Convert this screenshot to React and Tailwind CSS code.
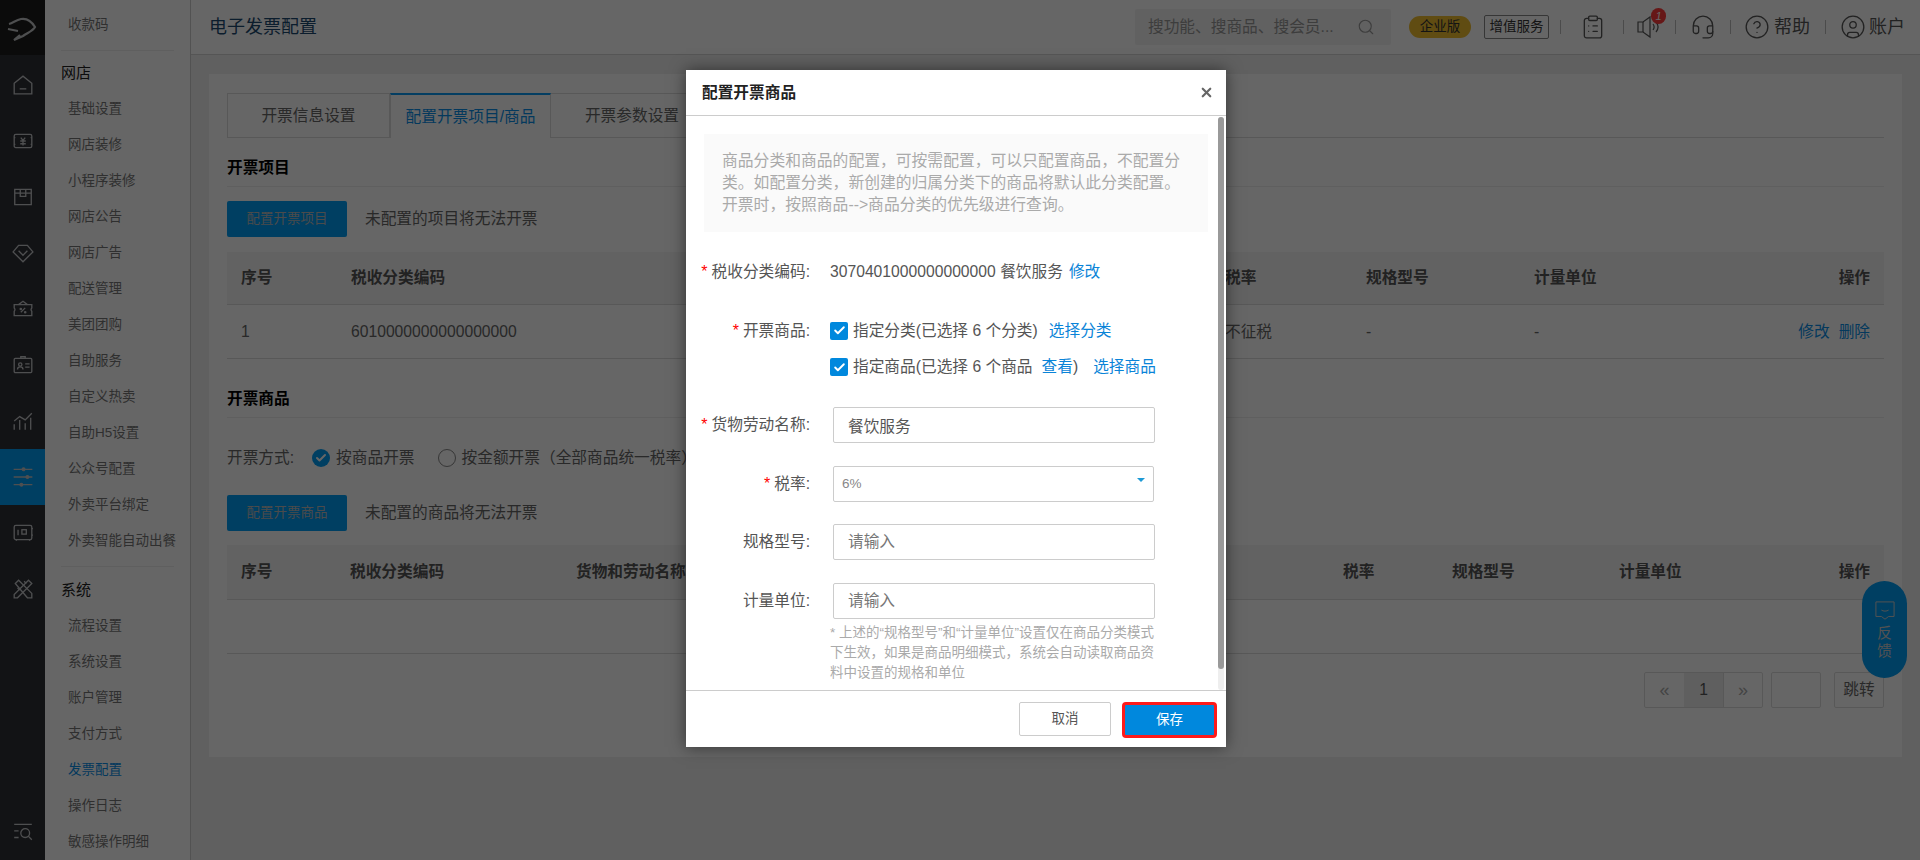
import React from 'react';
import { Search, ClipboardList, Headset, CircleHelp, CircleUser, X, Check } from 'lucide-react';

const sideIcons = [
  <g key="home"><path d="M2 8.5 10 2l8 6.5V18H2Z" /><path d="M7 13.5h6" /></g>,
  <g key="money"><rect x="2" y="4" width="16" height="12" rx="1.5" /><path d="M8 7l2 2.5L12 7M7.5 10h5M7.5 12.5h5M10 9.5V14" /><path d="M2 7h1M2 13h1M17 7h1M17 13h1" /></g>,
  <g key="box"><path d="M2.5 3h15v14h-15Z" /><path d="M2.5 6.5h15M7.5 3v6.5h5V3" /></g>,
  <g key="diamond"><path d="M6 3h8l5 6-9 9-9-9Z" /><path d="M6 8l4 4 4-4" /></g>,
  <g key="ticket"><path d="M2 6h16v3a2 2 0 0 0 0 3v4H2v-4a2 2 0 0 0 0-3Z" /><path d="M6 6l4-3 4 3M8 13l4-4" /><circle cx="8" cy="10" r=".6" /><circle cx="12" cy="13" r=".6" /></g>,
  <g key="card"><rect x="2" y="4" width="16" height="13" rx="1" /><path d="M8 4V2.5h4V4" /><circle cx="7.5" cy="9.5" r="1.5" /><path d="M5 14c0-3 5-3 5 0M12 9h4M12 12h4" /></g>,
  <g key="chart"><path d="M2 18v-5M7 18V9M12 18v-6M17 18V7M2 10l5-4 5 3 6-6" /></g>,
  <g key="sliders"><path d="M1.5 3h17M1.5 10h17M1.5 17h17" /><circle cx="10.5" cy="3" r="1.2" fill="currentColor" /><circle cx="14" cy="10" r="1.2" fill="currentColor" /><circle cx="8.5" cy="17" r="1.2" fill="currentColor" /></g>,
  <g key="safe"><rect x="2" y="3" width="16" height="13" rx="1.5" /><rect x="9" y="7" width="4" height="4" /><path d="M5.5 7v5M18 6h1M18 12h1M4 16v1M16 16v1" /></g>,
  <g key="tools"><path d="M3 5l3-3 12 12v4h-4Z" /><path d="M15 2l3 3-13 13H2v-3Z" /><path d="M11 3l2 2M5 9l2 2" /></g>,
];

const SideIcon = ({ children, className }) => (
  <svg width="22" height="22" viewBox="0 0 20 20" fill="none" stroke="currentColor" strokeWidth="1.2" className={className}>
    {children}
  </svg>
);

const shopMenu = ['基础设置', '网店装修', '小程序装修', '网店公告', '网店广告', '配送管理', '美团团购', '自助服务', '自定义热卖', '自助H5设置', '公众号配置', '外卖平台绑定', '外卖智能自动出餐'];
const systemMenu = ['流程设置', '系统设置', '账户管理', '支付方式', '发票配置', '操作日志', '敏感操作明细'];

const MenuItem = ({ label, active }) => (
  <div className={`h-9 flex items-center pl-[23px] whitespace-nowrap text-[13.5px] ${active ? 'text-[#0a8fe8]' : 'text-[#777]'}`}>
    {label}
  </div>
);

const Sep = () => <div className="w-px h-[14px] bg-[#bbb]" />;

const BlueBtn = ({ children }) => (
  <div className="w-[120px] h-9 rounded-[2px] bg-[#009df5] text-[#bbb] text-[13.5px] flex items-center justify-center">{children}</div>
);

const SectionTitle = ({ children }) => (
  <div className="h-[37px] border-b border-[#eee] text-[15.7px] font-bold text-black flex items-center">{children}</div>
);

const Cell = ({ children, className = '' }) => <div className={`flex items-center whitespace-nowrap ${className}`}>{children}</div>;

const Field = ({ label, required, children, className = '' }) => (
  <div className={`flex items-center ${className}`}>
    <div className="w-[124px] shrink-0 text-right text-[15.7px] text-[#555] whitespace-nowrap">
      {required && <span className="text-[#f00] text-[16px] mr-[4px]">*</span>}
      {label}:
    </div>
    {children}
  </div>
);

const TextBox = ({ placeholder, value }) => (
  <input
    readOnly
    placeholder={placeholder}
    defaultValue={value}
    className="ml-[23px] w-[322px] h-9 border border-[#ccc] rounded-[2px] px-[14px] text-[15.7px] text-[#555] placeholder:text-[#777] outline-none"
  />
);

const CheckBox = () => (
  <span className="w-[18px] h-[18px] rounded-[2px] bg-[#0088dd] flex items-center justify-center shrink-0">
    <Check size={13} strokeWidth={3.5} className="text-white" />
  </span>
);

export default function App() {
  return (
    <div className="relative w-[1920px] h-[860px] overflow-hidden flex bg-[#f0f0f0] [font-family:'Liberation_Sans','Noto_Sans_CJK_SC',sans-serif]">
      {/* icon rail */}
      <div className="w-[45px] shrink-0 bg-[#2e3036] flex flex-col text-[#c4c6c8]">
        <div className="h-[55px] bg-[#1c1c1c]">
          <svg width="45" height="55" viewBox="0 0 45 55" fill="none" stroke="currentColor" strokeWidth="2.2">
            <path d="M9 24C13 23 16 20 21 19C27 18 32 22 35 27C33 31 27 33 23 36L14 40L20 35" />
            <path d="M8 29L18 31" />
          </svg>
        </div>
        <div className="pt-[2px]">
          {sideIcons.map((icon, i) => (
            <div key={i} className={`h-14 flex items-center justify-center ${i === 7 ? 'bg-[#009df5]' : ''}`}>
              <SideIcon>{icon}</SideIcon>
            </div>
          ))}
        </div>
        <div className="mt-auto mb-[17px] flex justify-center">
          <SideIcon>
            <path d="M2 3h16M2 9h4M2 15h4" />
            <circle cx="12" cy="11" r="4" />
            <path d="M15 14l3 3" />
          </SideIcon>
        </div>
      </div>

      {/* sub menu */}
      <div className="w-[146px] shrink-0 bg-white border-r border-[#ccc]">
        <div className="mx-4 h-[51px] border-b border-[#eee] pl-[7px] flex items-center text-[13.5px] text-[#777]">收款码</div>
        <div className="h-[45px] pl-4 flex items-center text-[15px] text-[#222]">网店</div>
        <div className="-mt-[4.5px] ml-0">
          {shopMenu.map((m) => <MenuItem key={m} label={m} />)}
        </div>
        <div className="mx-4 mt-[6px] border-b border-[#eee]" />
        <div className="h-[47px] pl-4 flex items-center text-[15px] text-[#222]">系统</div>
        <div className="-mt-[5px]">
          {systemMenu.map((m) => <MenuItem key={m} label={m} active={m === '发票配置'} />)}
        </div>
      </div>

      {/* main */}
      <div className="flex-1 min-w-0 flex flex-col">
        <div className="h-[55px] shrink-0 bg-white border-b border-[#d5d5d5] flex items-center pl-[18px]">
          <div className="text-[18px] text-[#1d4a70]">电子发票配置</div>
          <div className="ml-auto flex items-center text-[#555]">
            <div className="w-[256px] h-9 bg-[#f2f2f2] rounded-[2px] flex items-center pl-[13px] pr-[16px] text-[15.7px] text-[#999]">
              <span className="flex-1">搜功能、搜商品、搜会员...</span>
              <Search size={18} strokeWidth={1.5} />
            </div>
            <div className="ml-[18px] w-[62px] h-[22px] rounded-full bg-[#f0be2e] text-[13.5px] text-[#333] flex items-center justify-center">企业版</div>
            <div className="ml-[13px] w-[65px] h-[24px] border border-[#888] rounded-[2px] text-[13.5px] text-[#333] flex items-center justify-center">增值服务</div>
            <div className="ml-[11px]"><Sep /></div>
            <ClipboardList size={26} strokeWidth={1.2} className="ml-[19px]" />
            <div className="ml-[17px]"><Sep /></div>
            <div className="relative ml-[13px]">
              <svg width="24" height="26" viewBox="0 0 24 26" fill="none" stroke="currentColor" strokeWidth="1.2">
                <path d="M1 8h5l7-5v20l-7-5H1Z" />
                <path d="M6 8v10" />
                <path d="M16 10c1.5 2 1.5 4 0 6M19 8c2.5 3 2.5 7 0 10" />
              </svg>
              <span className="absolute -top-[6px] right-[-5px] w-[15px] h-[16px] rounded-full bg-[#ff3a3a] text-white text-[11px] italic flex items-center justify-center">1</span>
            </div>
            <div className="ml-[14px]"><Sep /></div>
            <Headset size={26} strokeWidth={1.2} className="ml-[14px]" />
            <div className="ml-[14px]"><Sep /></div>
            <CircleHelp size={26} strokeWidth={1.2} className="ml-[13px]" />
            <span className="ml-[4px] text-[18px]">帮助</span>
            <div className="ml-[15px]"><Sep /></div>
            <CircleUser size={26} strokeWidth={1.2} className="ml-[14px]" />
            <span className="ml-[3px] mr-[15px] text-[18px]">账户</span>
          </div>
        </div>

        <div className="mx-[18px] mt-[19px] h-[683px] bg-white px-[18px] pt-[19px] text-[#666]">
          {/* tabs */}
          <div className="flex h-[45px] border-b border-[#ddd] text-[15.7px]">
            <div className="w-[163px] h-[45px] border border-[#ddd] flex items-center justify-center">开票信息设置</div>
            <div className="w-[161px] h-[45px] border-x border-[#ddd] border-t-2 border-t-[#0a9cf5] bg-white text-[#0a8fe8] flex items-center justify-center">配置开票项目/商品</div>
            <div className="w-[163px] h-[45px] border-y border-r border-[#ddd] flex items-center justify-center">开票参数设置</div>
          </div>

          {/* items */}
          <div className="mt-3"><SectionTitle>开票项目</SectionTitle></div>
          <div className="mt-[14px] flex items-center">
            <BlueBtn>配置开票项目</BlueBtn>
            <span className="ml-[18px] text-[15.7px]">未配置的项目将无法开票</span>
          </div>
          <div className="mt-[15px] text-[15.7px]">
            <div className="h-[53px] grid grid-cols-[124px_874px_141px_168px_1fr_auto] bg-[#f5f5f5] border-b border-[#ddd] font-bold text-[#555]">
              <Cell className="pl-[14px]">序号</Cell>
              <Cell>税收分类编码</Cell>
              <Cell>税率</Cell>
              <Cell>规格型号</Cell>
              <Cell>计量单位</Cell>
              <Cell className="pr-[14px]">操作</Cell>
            </div>
            <div className="h-[54px] grid grid-cols-[124px_874px_141px_168px_1fr_auto] border-b border-[#ddd]">
              <Cell className="pl-[14px]">1</Cell>
              <Cell>6010000000000000000</Cell>
              <Cell>不征税</Cell>
              <Cell>-</Cell>
              <Cell>-</Cell>
              <Cell className="pr-[14px] text-[#0a8fe8] gap-[9px]"><span>修改</span><span>删除</span></Cell>
            </div>
          </div>

          {/* goods */}
          <div className="mt-[22px]"><SectionTitle>开票商品</SectionTitle></div>
          <div className="mt-7 flex items-center text-[15.7px] h-6">
            <span>开票方式:</span>
            <span className="ml-[18px] w-[18px] h-[18px] rounded-full bg-[#009df5] flex items-center justify-center">
              <Check size={12} strokeWidth={4} className="text-white" />
            </span>
            <span className="ml-[6px]">按商品开票</span>
            <span className="ml-[23px] w-[18px] h-[18px] rounded-full border border-[#888]" />
            <span className="ml-[6px]">按金额开票（全部商品统一税率）</span>
          </div>
          <div className="mt-[25px] flex items-center">
            <BlueBtn>配置开票商品</BlueBtn>
            <span className="ml-[18px] text-[15.7px]">未配置的商品将无法开票</span>
          </div>
          <div className="mt-[14px] text-[15.7px]">
            <div className="h-[55px] grid grid-cols-[123px_226px_767px_109px_167px_1fr_auto] bg-[#f5f5f5] border-b border-[#ddd] font-bold text-[#555]">
              <Cell className="pl-[14px]">序号</Cell>
              <Cell>税收分类编码</Cell>
              <Cell>货物和劳动名称</Cell>
              <Cell>税率</Cell>
              <Cell>规格型号</Cell>
              <Cell>计量单位</Cell>
              <Cell className="pr-[14px]">操作</Cell>
            </div>
            <div className="h-[54px] border-b border-[#ddd]" />
          </div>

          {/* pager */}
          <div className="mt-[18px] flex justify-end text-[15.7px]">
            <div className="flex h-[36px] border border-[#ddd] rounded-[2px] text-[#aaa]">
              <div className="w-[39px] flex items-center justify-center text-[18px]">«</div>
              <div className="w-[39px] flex items-center justify-center bg-[#eee] text-[#555]">1</div>
              <div className="w-[39px] flex items-center justify-center border-l border-[#ddd] text-[18px]">»</div>
            </div>
            <div className="ml-2 w-[50px] h-[36px] border border-[#ddd] rounded-[2px]" />
            <div className="ml-[13px] w-[50px] h-[36px] border border-[#ddd] rounded-[2px] flex items-center justify-center">跳转</div>
          </div>
        </div>
      </div>

      {/* feedback pill */}
      <div className="absolute left-[1862px] top-[581px] w-[45px] h-[97px] rounded-full bg-[#009df5] text-[#ccc] flex flex-col items-center pt-5 text-[15px] leading-[18px]">
        <svg width="20" height="20" viewBox="0 0 22 22" fill="none" stroke="currentColor" strokeWidth="1.1" className="mb-[3px]">
          <path d="M1 1h20v16h-6l-4 3-4-3H1Z" />
          <path d="M7 10c2 1.5 6 1.5 8 0" />
        </svg>
        <span>反</span>
        <span>馈</span>
      </div>

      {/* backdrop */}
      <div className="absolute inset-0 bg-black/60" />

      {/* modal */}
      <div className="absolute left-[686px] top-[70px] w-[540px] h-[677px] bg-white shadow-[0_0_15px_rgba(0,0,0,0.5)] flex flex-col">
        <div className="h-[46px] shrink-0 border-b border-[#ccc] pl-4 pr-3 flex items-center justify-between">
          <span className="text-[15.7px] font-bold text-[#222]">配置开票商品</span>
          <X size={15} strokeWidth={3.5} className="text-[#666]" />
        </div>

        <div className="relative flex-1 min-h-0 text-[15.7px] text-[#555]">
          <div className="absolute right-[2px] top-[1px] w-[6px] bottom-0 rounded-full bg-[#eee]">
            <div className="h-[552px] rounded-full bg-[#999]" />
          </div>

          <div className="mx-[18px] mt-[18px] h-[98px] bg-[#fafafa] px-[18px] py-4 leading-[22px] text-[15.8px] text-[#aaa]">
            商品分类和商品的配置，可按需配置，可以只配置商品，不配置分类。如配置分类，新创建的归属分类下的商品将默认此分类配置。开票时，按照商品--&gt;商品分类的优先级进行查询。
          </div>

          <Field required label="税收分类编码" className="mt-[29px] h-[22px]">
            <span className="ml-5 whitespace-nowrap">3070401000000000000 餐饮服务</span>
            <span className="ml-[6px] text-[#0a84d8]">修改</span>
          </Field>
          <Field required label="开票商品" className="mt-[36px] h-6">
            <span className="ml-5 flex items-center whitespace-nowrap">
              <CheckBox />
              <span className="ml-[5px]">指定分类(已选择 6 个分类)</span>
              <span className="ml-[11px] text-[#0a84d8]">选择分类</span>
            </span>
          </Field>
          <div className="mt-3 h-6 ml-[144px] flex items-center whitespace-nowrap">
            <CheckBox />
            <span className="ml-[5px]">指定商品(已选择 6 个商品</span>
            <span className="ml-[9px] text-[#0a84d8]">查看</span>
            <span>)</span>
            <span className="ml-[15px] text-[#0a84d8]">选择商品</span>
          </div>
          <Field required label="货物劳动名称" className="mt-7">
            <TextBox value="餐饮服务" />
          </Field>
          <Field required label="税率" className="mt-[23px]">
            <div className="ml-[23px] w-[321px] h-9 border border-[#ccc] rounded-[2px] pl-2 pr-2 flex items-center justify-between text-[13.5px] text-[#888]">
              <span>6%</span>
              <svg width="8" height="6" viewBox="0 0 8 6" className="-mt-2 text-[#1d9ad6]" fill="currentColor">
                <path d="M0 1h8L4 5Z" />
              </svg>
            </div>
          </Field>
          <Field label="规格型号" className="mt-[22px]">
            <TextBox placeholder="请输入" />
          </Field>
          <Field label="计量单位" className="mt-[23px]">
            <TextBox placeholder="请输入" />
          </Field>
          <div className="mt-1 ml-[144px] w-[326px] text-[13.5px] leading-5 text-[#aaa]">
            * 上述的“规格型号”和“计量单位”设置仅在商品分类模式下生效，如果是商品明细模式，系统会自动读取商品资料中设置的规格和单位
          </div>
        </div>

        <div className="h-[57px] shrink-0 border-t border-[#ccc] flex items-start pt-[11px] text-[13.5px]">
          <div className="ml-[333px] w-[92px] h-[34px] border border-[#ccc] rounded-[2px] text-[#555] flex items-center justify-center">取消</div>
          <div className="ml-[11px] w-[95px] h-[36px] border-[3px] border-[#ff1a1a] rounded-[4px] bg-[#0088dd] text-white flex items-center justify-center">保存</div>
        </div>
      </div>
    </div>
  );
}
